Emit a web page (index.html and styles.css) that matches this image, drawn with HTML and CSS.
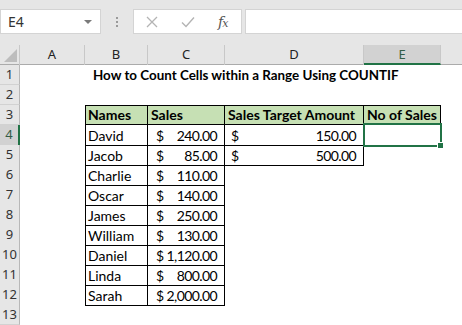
FILE: index.html
```html
<!DOCTYPE html>
<html>
<head>
<meta charset="utf-8">
<link rel="stylesheet" href="styles.css">
</head>
<body>
<div class="app">
  <div class="toolbar">
    <div class="namebox"><span class="ref">E4</span><span class="caret"></span></div>
    <div class="grip"><i></i><i></i><i></i></div>
    <div class="fnbtns">
      <svg class="icon" width="12" height="12" viewBox="0 0 12 12"><path d="M1 1L11 11M11 1L1 11" stroke="#b4b4b4" stroke-width="1.3" fill="none"/></svg>
      <svg class="icon" width="14" height="12" viewBox="0 0 14 12"><path d="M1 6.5L5 10.5L13 1.5" stroke="#b4b4b4" stroke-width="1.4" fill="none"/></svg>
      <span class="fx">f<span class="sx">x</span></span>
    </div>
    <div class="formula"></div>
  </div>
  <div class="sheet">
    <div class="row colhead">
      <div class="corner"><svg width="13" height="13" viewBox="0 0 13 13"><path d="M13 0V13H0Z" fill="#bdbdbd"/></svg></div>
      <div class="ch">A</div><div class="ch">B</div><div class="ch">C</div><div class="ch">D</div><div class="ch sel">E</div><div class="ch last"></div>
    </div>
    <div class="row">
      <div class="rh">1</div><div class="c"></div><div class="c title">How to Count Cells within a Range Using COUNTIF</div>
    </div>
    <div class="row">
      <div class="rh">2</div>
    </div>
    <div class="row">
      <div class="rh">3</div><div class="c"></div>
      <div class="c b bt bl hd">Names</div><div class="c b bt hd">Sales</div><div class="c b bt hd">Sales Target Amount</div><div class="c b bt hd">No of Sales</div>
    </div>
    <div class="row">
      <div class="rh sel">4</div><div class="c"></div>
      <div class="c b bl">David</div><div class="c b cur"><span>$</span><span class="n">240.00</span></div><div class="c b cur wide"><span>$</span><span class="n">150.00</span></div><div class="c active"></div>
    </div>
    <div class="row">
      <div class="rh">5</div><div class="c"></div>
      <div class="c b bl">Jacob</div><div class="c b cur"><span>$</span><span class="n">85.00</span></div><div class="c b cur wide"><span>$</span><span class="n">500.00</span></div>
    </div>
    <div class="row">
      <div class="rh">6</div><div class="c"></div>
      <div class="c b bl">Charlie</div><div class="c b cur"><span>$</span><span class="n">110.00</span></div>
    </div>
    <div class="row">
      <div class="rh">7</div><div class="c"></div>
      <div class="c b bl">Oscar</div><div class="c b cur"><span>$</span><span class="n">140.00</span></div>
    </div>
    <div class="row">
      <div class="rh">8</div><div class="c"></div>
      <div class="c b bl">James</div><div class="c b cur"><span>$</span><span class="n">250.00</span></div>
    </div>
    <div class="row">
      <div class="rh">9</div><div class="c"></div>
      <div class="c b bl">William</div><div class="c b cur"><span>$</span><span class="n">130.00</span></div>
    </div>
    <div class="row">
      <div class="rh">10</div><div class="c"></div>
      <div class="c b bl">Daniel</div><div class="c b cur"><span>$</span><span class="n">1,120.00</span></div>
    </div>
    <div class="row">
      <div class="rh">11</div><div class="c"></div>
      <div class="c b bl">Linda</div><div class="c b cur"><span>$</span><span class="n">800.00</span></div>
    </div>
    <div class="row">
      <div class="rh">12</div><div class="c"></div>
      <div class="c b bl">Sarah</div><div class="c b cur"><span>$</span><span class="n">2,000.00</span></div>
    </div>
    <div class="row">
      <div class="rh">13</div>
    </div>
  </div>
</div>
</body>
</html>
```

FILE: styles.css
```css
* { box-sizing: border-box; }
html, body { margin: 0; padding: 0; background: #fff; }
.app { width: 462px; height: 325px; overflow: hidden; font-family: "Lato", "Liberation Sans", sans-serif; }

.toolbar {
  height: 45px;
  background: #e6e6e6;
  display: flex;
  align-items: flex-start;
  padding-top: 9px;
}
.namebox {
  width: 101px; height: 25px;
  background: #fff;
  border: 1px solid #d4d4d4;
  display: flex; align-items: center; justify-content: space-between;
  padding: 0 6px 0 7px;
  font-family: "Noto Sans", "Liberation Sans", sans-serif;
  font-size: 14px; color: #333;
}
.caret { width: 0; height: 0; border-left: 4px solid transparent; border-right: 4px solid transparent; border-top: 4px solid #7a7a7a; margin-right: 2px; }
.grip { width: 32px; height: 25px; display: flex; flex-direction: column; align-items: center; justify-content: center; gap: 2px; }
.grip i { width: 2px; height: 2px; background: #9a9a9a; display: block; }
.fnbtns {
  width: 109px; height: 25px;
  background: #fff;
  border: 1px solid #d4d4d4;
  display: flex; align-items: center;
  padding-left: 12px;
  gap: 23px;
}
.fx { font-family: "DejaVu Serif", "Liberation Serif", serif; font-style: italic; font-size: 14px; color: #555; letter-spacing: -1px; }
.fx .sx { font-size: 11px; }
.formula {
  flex: 1; height: 25px; margin-left: 3px;
  background: #fff;
  border: 1px solid #d4d4d4;
  border-right: 0;
}

.row {
  display: grid;
  grid-template-columns: 20px 65px 63px 77px 139px 77px 21px;
  height: 20px;
}
.colhead { background: #e6e6e6; border-bottom: 1px solid #ababab; }
.corner { display: flex; align-items: flex-end; justify-content: flex-end; padding: 0 2px 3px 0; border-right: 1px solid #c8c8c8; }
.ch {
  border-right: 1px solid #c8c8c8;
  text-align: center;
  font-family: "Noto Sans", "Liberation Sans", sans-serif;
  font-size: 13px; line-height: 19px; color: #222;
}
.ch.last { border-right: 0; }
.ch.sel { background: #d2d2d2; color: #335c46; border-bottom: 2px solid #217346; line-height: 18px; }

.rh {
  grid-column: 1;
  background: #e6e6e6;
  border-bottom: 1px solid #d2d2d2;
  border-right: 1px solid #b8b8b8;
  text-align: center;
  font-family: "Noto Sans", "Liberation Sans", sans-serif;
  font-size: 13px; line-height: 19px; color: #333;
}
.rh.sel { background: #d2d2d2; color: #335c46; border-right: 2px solid #217346; }

.c { font-size: 14px; line-height: 19px; color: #000; white-space: nowrap; padding: 1px 2px 0 3px; }
.title { grid-column: 3 / span 4; font-weight: bold; font-size: 13.4px; padding-left: 8px; overflow: visible; }
.b { border-right: 1px solid #000; border-bottom: 1px solid #000; }
.bt { border-top: 1px solid #000; line-height: 18px; padding-top: 0; }
.bl { border-left: 1px solid #000; padding-left: 2px; }
.hd { background: #c6e0b4; font-weight: bold; }
.cur { display: flex; justify-content: space-between; padding: 1px 7px 0 8px; }
.cur.wide { padding-left: 6px; }
.n { letter-spacing: -0.6px; }
.active { position: relative; grid-column: 6; }
.active::before {
  content: ""; position: absolute; left: -1px; top: -2px; right: -1px; bottom: -1px;
  border: 2px solid #217346;
}
.active::after {
  content: ""; position: absolute; right: -3px; bottom: -3px; width: 5px; height: 5px;
  background: #217346; border: 1px solid #fff;
}
```
